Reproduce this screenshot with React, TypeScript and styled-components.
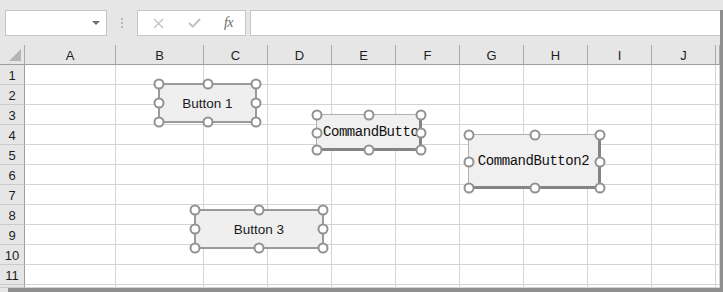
import React from 'react';
import styled, { createGlobalStyle } from 'styled-components';

const Global = createGlobalStyle`
  html, body { margin: 0; padding: 0; background: #e6e6e6; }
  body { font-family: "Liberation Sans", Arial, sans-serif; }
`;

const Window = styled.div`
  width: 723px;
  height: 292px;
  background: #e6e6e6;
  display: flex;
  flex-direction: column;
  overflow: hidden;
`;

const Body = styled.div`
  display: flex;
  height: 288px;
`;

const Main = styled.div`
  width: 720px;
  display: flex;
  flex-direction: column;
`;

const RightEdge = styled.div`
  width: 3px;
  margin-top: 10px;
  background: #8f8f8f;
`;

const BottomEdge = styled.div`
  height: 4px;
  margin-left: 8px;
  background: #8f8f8f;
`;

const FormulaRow = styled.div`
  height: 45px;
  box-sizing: border-box;
  padding: 10px 0 9px 5px;
  display: flex;
  align-items: stretch;
`;

const Box = styled.div`
  box-sizing: border-box;
  background: #fff;
  border: 1px solid #c6c6c6;
`;

const NameBox = styled(Box)`
  width: 102px;
  display: flex;
  align-items: center;
  justify-content: flex-end;
  padding-right: 6px;
`;

const DropArrow = styled.div`
  width: 0;
  height: 0;
  border-left: 4px solid transparent;
  border-right: 4px solid transparent;
  border-top: 4px solid #707070;
`;

const Grip = styled.div`
  width: 30px;
  display: flex;
  flex-direction: column;
  align-items: center;
  justify-content: center;
  gap: 2px;
`;

const GripDot = styled.div`
  width: 2px;
  height: 2px;
  background: #b8b8b8;
`;

const FxBox = styled(Box)`
  width: 109px;
  display: grid;
  grid-template-columns: 40px 32px 37px;
  align-items: center;
  justify-items: center;
`;

const FxLabel = styled.span`
  font-family: "Liberation Serif", "Times New Roman", serif;
  font-style: italic;
  font-size: 14px;
  color: #6a6a6a;
  letter-spacing: -0.5px;
`;

const FormulaInput = styled(Box)`
  flex: 1;
  margin-left: 4px;
  border-right: none;
`;

const SheetArea = styled.div`
  position: relative;
  background: #fff;
`;

const Grid = styled.div`
  display: grid;
  grid-template-columns: 25px 91px 88px repeat(8, 64px) 4px;
  grid-template-rows: repeat(12, 20px) 3px;
`;

const Corner = styled.div`
  box-sizing: border-box;
  background: #e6e6e6;
  border-right: 1px solid #ababab;
  border-bottom: 1px solid #9e9e9e;
  display: flex;
  align-items: flex-end;
  justify-content: flex-end;
  padding: 0 3px 3px 0;
`;

const CornerTriangle = styled.div`
  width: 0;
  height: 0;
  border-left: 12px solid transparent;
  border-bottom: 12px solid #b5b5b5;
`;

const ColHeader = styled.div`
  box-sizing: border-box;
  background: #e6e6e6;
  border-right: 1px solid #ababab;
  border-bottom: 1px solid #9e9e9e;
  display: flex;
  align-items: center;
  justify-content: center;
  padding-top: 2px;
  font-size: 13px;
  color: #1e1e1e;
`;

const RowHeader = styled.div`
  box-sizing: border-box;
  background: #e6e6e6;
  border-right: 1px solid #9e9e9e;
  border-bottom: 1px solid #cbcbcb;
  display: flex;
  align-items: center;
  justify-content: center;
  padding-top: 1px;
  font-size: 13px;
  color: #1e1e1e;
  overflow: hidden;
`;

const Cell = styled.div`
  box-sizing: border-box;
  background: #fff;
  border-right: 1px solid #d4d4d4;
  border-bottom: 1px solid #d4d4d4;
`;

const Frame = styled.div<{ $x: number; $y: number; $w: number; $h: number }>`
  position: absolute;
  left: ${(p) => p.$x}px;
  top: ${(p) => p.$y}px;
  width: ${(p) => p.$w}px;
  height: ${(p) => p.$h}px;
`;

const FormFace = styled.div`
  position: absolute;
  inset: -1px;
  box-sizing: border-box;
  background: #efefef;
  border: 2px solid #9a9a9a;
  display: flex;
  align-items: center;
  justify-content: center;
  font-family: "Liberation Sans", Arial, sans-serif;
  font-size: 13.5px;
  color: #1a1a1a;
`;

const CommandFace = styled.div<{ $align: 'left' | 'center' }>`
  position: absolute;
  inset: -1px;
  box-sizing: border-box;
  background: #f0f0f0;
  border-top: 1px solid #b0b0b0;
  border-left: 1px solid #b0b0b0;
  border-right: 3px solid #848484;
  border-bottom: 3px solid #848484;
  display: flex;
  align-items: center;
  justify-content: ${(p) => (p.$align === 'left' ? 'flex-start' : 'center')};
  padding-left: ${(p) => (p.$align === 'left' ? '6px' : '0')};
  overflow: hidden;
  white-space: nowrap;
  font-family: "Liberation Mono", "Courier New", monospace;
  font-size: 14px;
  letter-spacing: -0.45px;
  color: #111;
`;

const Handle = styled.div<{ $h: number; $v: number }>`
  position: absolute;
  left: ${(p) => p.$h}%;
  top: ${(p) => p.$v}%;
  width: 11px;
  height: 11px;
  box-sizing: border-box;
  border-radius: 50%;
  border: 2px solid #929292;
  background: #fff;
  transform: translate(-50%, -50%);
  z-index: 2;
`;

const HANDLE_SPOTS: Array<[number, number]> = [
  [0, 0], [50, 0], [100, 0],
  [0, 50], [100, 50],
  [0, 100], [50, 100], [100, 100],
];

type Ctl = {
  kind: 'form' | 'command';
  label: string;
  x: number;
  y: number;
  w: number;
  h: number;
  align?: 'left' | 'center';
};

const CONTROLS: Ctl[] = [
  { kind: 'form', label: 'Button 1', x: 159, y: 39, w: 97, h: 38 },
  { kind: 'command', label: 'CommandButton1', x: 317, y: 70, w: 104, h: 35, align: 'left' },
  { kind: 'command', label: 'CommandButton2', x: 469, y: 90, w: 131, h: 53, align: 'center' },
  { kind: 'form', label: 'Button 3', x: 195, y: 165, w: 128, h: 38 },
];

const COLS = ['A', 'B', 'C', 'D', 'E', 'F', 'G', 'H', 'I', 'J', ''];
const ROWS = ['1', '2', '3', '4', '5', '6', '7', '8', '9', '10', '11', ''];

const CrossIcon = () => (
  <svg width="11" height="11" viewBox="0 0 11 11">
    <path d="M1 1 L10 10 M10 1 L1 10" stroke="#c2c2c2" strokeWidth="1.4" fill="none" />
  </svg>
);

const CheckIcon = () => (
  <svg width="13" height="10" viewBox="0 0 13 10">
    <path d="M1 5 L4.8 8.6 L12 1" stroke="#c2c2c2" strokeWidth="2" fill="none" />
  </svg>
);

export default function App() {
  return (
    <Window>
      <Global />
      <Body>
        <Main>
          <FormulaRow>
            <NameBox>
              <DropArrow />
            </NameBox>
            <Grip>
              <GripDot />
              <GripDot />
              <GripDot />
            </Grip>
            <FxBox>
              <CrossIcon />
              <CheckIcon />
              <FxLabel>fx</FxLabel>
            </FxBox>
            <FormulaInput />
          </FormulaRow>
          <SheetArea>
            <Grid>
              <Corner>
                <CornerTriangle />
              </Corner>
              {COLS.map((c, i) => (
                <ColHeader key={'c' + i}>{c}</ColHeader>
              ))}
              {ROWS.map((r, ri) => (
                <React.Fragment key={'r' + ri}>
                  <RowHeader>{r}</RowHeader>
                  {COLS.map((_, ci) => (
                    <Cell key={ci} />
                  ))}
                </React.Fragment>
              ))}
            </Grid>
            {CONTROLS.map((c) => (
              <Frame key={c.label} $x={c.x} $y={c.y} $w={c.w} $h={c.h}>
                {c.kind === 'form' ? (
                  <FormFace>{c.label}</FormFace>
                ) : (
                  <CommandFace $align={c.align ?? 'center'}>{c.label}</CommandFace>
                )}
                {HANDLE_SPOTS.map(([h, v], i) => (
                  <Handle key={i} $h={h} $v={v} />
                ))}
              </Frame>
            ))}
          </SheetArea>
        </Main>
        <RightEdge />
      </Body>
      <BottomEdge />
    </Window>
  );
}
